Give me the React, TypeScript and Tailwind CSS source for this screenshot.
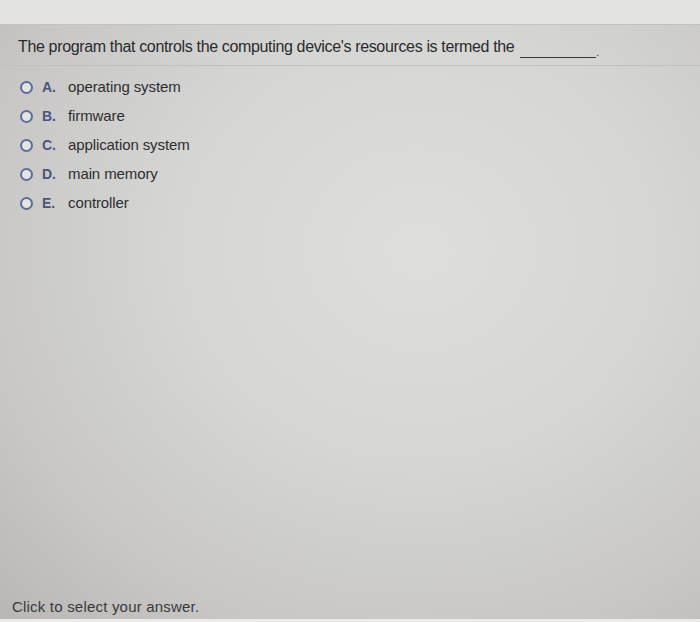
import React from 'react';

const options = [
    { letter: 'A.', text: 'operating system' },
    { letter: 'B.', text: 'firmware' },
    { letter: 'C.', text: 'application system' },
    { letter: 'D.', text: 'main memory' },
    { letter: 'E.', text: 'controller' },
];

const App: React.FC = () => {
    return (
        <div className="w-[700px] h-[622px] overflow-hidden flex flex-col font-['Liberation_Sans',Arial,sans-serif] text-[#2b2b2d] bg-[radial-gradient(ellipse_at_60%_40%,#dededc_0%,#d6d6d4_40%,#c8c7c5_75%,#b8b7b5_100%)]">
            {/* top strip */}
            <div className="h-[25px] bg-[#e3e3e1] border-b border-[#c2c2c0]" />

            {/* question */}
            <div className="h-[41px] flex items-end pb-[6px] pl-[18px] border-b border-[#c0c0be]">
                <p className="text-[16px] tracking-[-0.35px]">The program that controls the computing device's resources is termed the</p>
                <span className="ml-[6px] mb-[1px] w-[76px] border-b border-[#3a3a3a]" />
                <span className="text-[10px] leading-none mb-[1px]">.</span>
            </div>

            {/* options */}
            <div className="flex flex-col pt-[12px] pl-[20px] gap-[11px]">
                {options.map((o) => (
                    <div key={o.letter} className="flex items-center h-[18px]">
                        <span className="w-[13px] h-[13px] rounded-full border-2 border-[#5e6c98] bg-[#e4e4e6]" />
                        <span className="ml-[9px] w-[26px] text-[14px] font-bold text-[#4a5580]">{o.letter}</span>
                        <span className="text-[15px] tracking-[-0.1px] text-[#2e2e30]">{o.text}</span>
                    </div>
                ))}
            </div>

            <div className="flex-1" />

            {/* footer */}
            <div className="pl-[12px] pb-[1px] flex">
                <p className="text-[15px] tracking-[0.2px] text-[#3a3a3c]">Click to select your answer.</p>
            </div>
            <div className="h-[3px] bg-[#ecebea]" />
        </div>
    );
};

export default App;
